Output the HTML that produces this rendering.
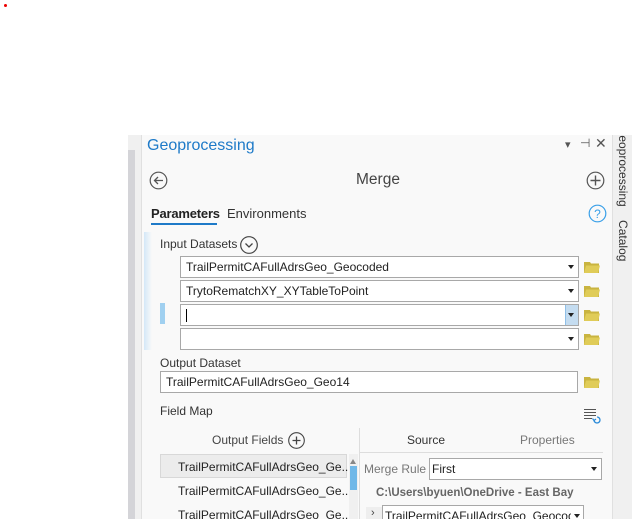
<!DOCTYPE html>
<html><head><style>
*{margin:0;padding:0;box-sizing:border-box}
html,body{width:632px;height:519px;overflow:hidden}
body{background:#fff;position:relative;font-family:"Liberation Sans",sans-serif;color:#333;font-size:12px}
.a{position:absolute}
.inp{position:absolute;background:#fff;border:1px solid #a8a8a8;height:22px;font-size:12px;line-height:20px;padding-left:5px;color:#222}
.dd{position:absolute;right:4px;top:8px;width:0;height:0;border-left:3px solid transparent;border-right:3px solid transparent;border-top:4px solid #222}
.fold{position:absolute;width:16px;height:14px}
.t{position:absolute;white-space:nowrap}
</style></head><body>
<div class="a" style="left:4px;top:4px;width:3px;height:3px;background:#e00;border-radius:2px"></div>
<div class="a" style="left:128px;top:135px;width:14px;height:384px;background:#f0f0f0"></div>
<div class="a" style="left:128px;top:150px;width:7px;height:369px;background:#d4d4d8"></div>
<div class="a" style="left:141px;top:135px;width:472px;height:384px;background:#f9f9f9;border-left:1px solid #e0e0e0;border-right:1px solid #e0e0e0"></div>
<div class="a" style="left:613px;top:135px;width:19px;height:384px;background:#f0f0f0;overflow:hidden">
<div class="t" style="left:17px;top:-9px;transform:rotate(90deg);transform-origin:0 0;font-size:12px;color:#333">Geoprocessing&nbsp;&nbsp;&nbsp;&nbsp;Catalog</div>
</div>
<div class="t" style="left:147px;top:137px;font-size:16px;color:#1e7ac8">Geoprocessing</div>
<div class="t" style="left:565px;top:138px;font-size:11px;color:#555">▾</div>
<div class="t" style="left:580px;top:136px;font-size:12px;color:#555">⊣</div>
<div class="t" style="left:595px;top:135px;font-size:14px;color:#555">✕</div>
<svg class="a" style="left:149px;top:171px" width="19" height="19"><circle cx="9.5" cy="9.5" r="8.3" fill="none" stroke="#555" stroke-width="1.2"/><path d="M14 9.5H5.5M9 6L5.5 9.5 9 13" fill="none" stroke="#555" stroke-width="1.3"/></svg>
<div class="t" style="left:356px;top:171px;font-size:15.5px;color:#444">Merge</div>
<svg class="a" style="left:586px;top:171px" width="19" height="19"><circle cx="9.5" cy="9.5" r="8.3" fill="none" stroke="#555" stroke-width="1.2"/><path d="M9.5 4.5v10M4.5 9.5h10" stroke="#555" stroke-width="1.4"/></svg>
<div class="t" style="left:151px;top:206px;font-size:13px;color:#222;font-weight:bold;letter-spacing:-0.2px">Parameters</div>
<div class="a" style="left:151px;top:223px;width:66px;height:2px;background:#1e7ac8"></div>
<div class="t" style="left:227px;top:206px;font-size:13px;color:#333">Environments</div>
<svg class="a" style="left:588px;top:204px" width="19" height="19"><circle cx="9.5" cy="9.5" r="8.3" fill="none" stroke="#3aa0e8" stroke-width="1.2"/><text x="9.5" y="14" font-size="12" text-anchor="middle" fill="#3aa0e8" font-family="Liberation Sans">?</text></svg>
<div class="a" style="left:144px;top:232px;width:8px;height:118px;background:linear-gradient(90deg,#d4e8f8,#f9f9f9)"></div>
<div class="t" style="left:160px;top:237px;font-size:12px;color:#333">Input Datasets</div>
<svg class="a" style="left:239px;top:235px" width="20" height="20"><circle cx="10" cy="10" r="8.3" fill="none" stroke="#444" stroke-width="1.2"/><path d="M6.5 8.5L10 12l3.5-3.5" fill="none" stroke="#444" stroke-width="1.3"/></svg>
<div class="inp" style="left:180px;top:256px;width:399px">TrailPermitCAFullAdrsGeo_Geocoded<div class="dd"></div></div>
<div class="inp" style="left:180px;top:280px;width:399px">TrytoRematchXY_XYTableToPoint<div class="dd"></div></div>
<div class="a" style="left:160px;top:303px;width:5px;height:21px;background:#a0d0f0"></div>
<div class="inp" style="left:180px;top:304px;width:399px"><div class="a" style="left:5px;top:4px;width:1px;height:13px;background:#000"></div><div class="a" style="right:0;top:0;width:13px;height:20px;background:#c4dcf0;border-left:1px solid #90c0e8"></div><div class="dd"></div></div>
<div class="inp" style="left:180px;top:328px;width:399px"><div class="dd"></div></div>
<div class="t" style="left:160px;top:356px;font-size:12px;color:#333">Output Dataset</div>
<div class="inp" style="left:160px;top:371px;width:418px">TrailPermitCAFullAdrsGeo_Geo14</div>
<svg class="fold" style="left:584px;top:260px" viewBox="0 0 16 14"><path d="M0 2h6l1 1.5h8V13H0z" fill="#c9b440"/><path d="M2 5.5h14l-2 7.5H0z" fill="#e0cc58"/></svg>
<svg class="fold" style="left:584px;top:284px" viewBox="0 0 16 14"><path d="M0 2h6l1 1.5h8V13H0z" fill="#c9b440"/><path d="M2 5.5h14l-2 7.5H0z" fill="#e0cc58"/></svg>
<svg class="fold" style="left:584px;top:308px" viewBox="0 0 16 14"><path d="M0 2h6l1 1.5h8V13H0z" fill="#c9b440"/><path d="M2 5.5h14l-2 7.5H0z" fill="#e0cc58"/></svg>
<svg class="fold" style="left:584px;top:332px" viewBox="0 0 16 14"><path d="M0 2h6l1 1.5h8V13H0z" fill="#c9b440"/><path d="M2 5.5h14l-2 7.5H0z" fill="#e0cc58"/></svg>
<svg class="fold" style="left:584px;top:375px" viewBox="0 0 16 14"><path d="M0 2h6l1 1.5h8V13H0z" fill="#c9b440"/><path d="M2 5.5h14l-2 7.5H0z" fill="#e0cc58"/></svg>
<div class="t" style="left:160px;top:404px;font-size:12px;color:#333">Field Map</div>
<svg class="a" style="left:583px;top:408px" width="18" height="18"><path d="M1 1.5h12M1 4.5h12M1 7.5h12M1 10.5h8" stroke="#555" stroke-width="1"/><path d="M11 12a3 3 0 1 0 3-3" fill="none" stroke="#2a8ad8" stroke-width="1.3"/><path d="M9.5 10.5l1.5 2 2-1.5" fill="none" stroke="#2a8ad8" stroke-width="1.2"/></svg>
<div class="a" style="left:359px;top:428px;width:1px;height:91px;background:#ddd"></div>
<div class="t" style="left:212px;top:433px;font-size:12px;color:#444">Output Fields</div>
<svg class="a" style="left:287px;top:431px" width="19" height="19"><circle cx="9.5" cy="9.5" r="7.8" fill="none" stroke="#444" stroke-width="1.1"/><path d="M9.5 5.5v8M5.5 9.5h8" stroke="#444" stroke-width="1.3"/></svg>
<div class="t" style="left:407px;top:433px;font-size:12px;color:#333">Source</div>
<div class="t" style="left:520px;top:433px;font-size:12px;color:#777">Properties</div>
<div class="a" style="left:360px;top:452px;width:243px;height:1px;background:#ddd"></div>
<div class="a" style="left:160px;top:454px;width:187px;height:24px;background:#ececec;border:1px solid #d8d8d8"></div>
<div class="t" style="left:178px;top:460px;font-size:12px;color:#222">TrailPermitCAFullAdrsGeo_Ge...</div>
<div class="t" style="left:178px;top:484px;font-size:12px;color:#222">TrailPermitCAFullAdrsGeo_Ge...</div>
<div class="t" style="left:178px;top:508px;font-size:12px;color:#222">TrailPermitCAFullAdrsGeo_Ge...</div>
<div class="a" style="left:349px;top:454px;width:9px;height:65px;background:#f0f0f0"></div>
<div class="a" style="left:350px;top:459px;width:0;height:0;border-left:3.5px solid transparent;border-right:3.5px solid transparent;border-bottom:5px solid #888"></div>
<div class="a" style="left:350px;top:466px;width:7px;height:24px;background:#70b8e8"></div>
<div class="t" style="left:364px;top:462px;font-size:12px;color:#777">Merge Rule</div>
<div class="inp" style="left:429px;top:458px;width:173px;padding-left:2px">First<div class="dd"></div></div>
<div class="t" style="left:376px;top:487px;font-size:11.5px;color:#666;font-weight:bold">C:\Users\byuen\OneDrive - East Bay</div>
<div class="a" style="left:366px;top:507px;width:16px;height:12px;background:#eee"></div>
<div class="t" style="left:371px;top:507px;font-size:11px;color:#444">›</div>
<div class="inp" style="left:382px;top:505px;width:202px;padding-left:2px;overflow:hidden;white-space:nowrap">TrailPermitCAFullAdrsGeo_Geocode<div class="a" style="right:0;top:0;width:12px;height:20px;background:#fff"></div><div class="dd" style="right:3px"></div></div>
</body></html>
